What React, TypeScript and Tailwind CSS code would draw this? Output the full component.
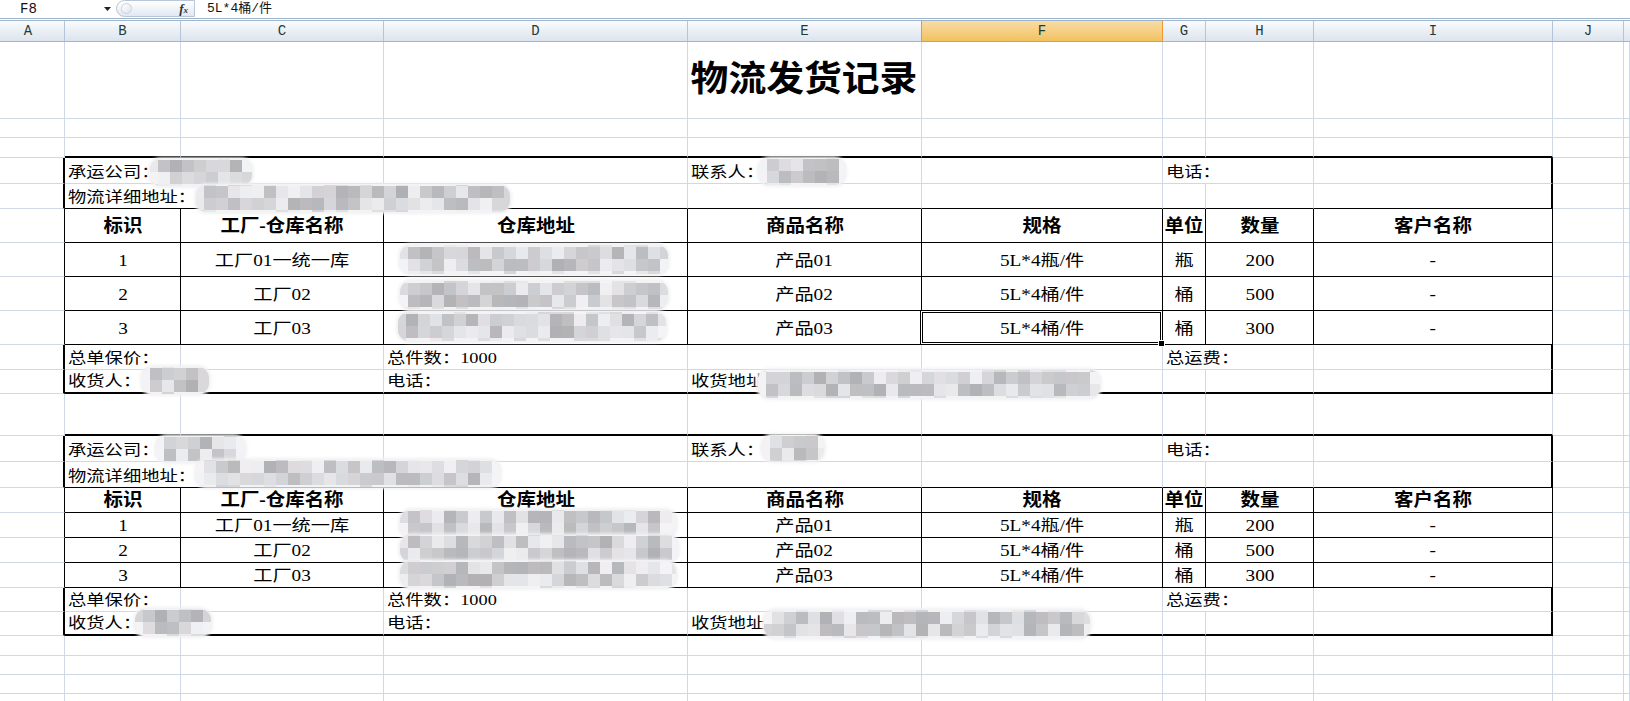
import React from 'react';

type Bd = 'g' | 'b' | 'B' | 'n';
type Kind = 'info' | 'head' | 'data' | 'title';
type Cell = { t?: React.ReactNode; r: Bd; b: Bd; k: Kind };
type Row = { h: string; cells: Cell[] };

const RB: Record<Bd, string> = {
  g: 'border-r border-r-[#d0d7e5]',
  b: 'border-r border-r-black',
  B: 'border-r-2 border-r-black',
  n: '',
};
const BB: Record<Bd, string> = {
  g: 'border-b border-b-[#d0d7e5]',
  b: 'border-b border-b-black',
  B: 'border-b-2 border-b-black',
  n: '',
};

const W = [
  'w-[65px] shrink-0',
  'w-[116px] shrink-0',
  'w-[203px] shrink-0',
  'w-[304px] shrink-0',
  'w-[234px] shrink-0',
  'w-[241px] shrink-0',
  'w-[43px] shrink-0',
  'w-[108px] shrink-0',
  'w-[239px] shrink-0',
  'w-[71px] shrink-0',
  'flex-1 min-w-0',
];
const COLS = ['A', 'B', 'C', 'D', 'E', 'F', 'G', 'H', 'I', 'J', ''];

const KIND: Record<Kind, { wrap: string; span: string }> = {
  info: {
    wrap: 'items-end justify-start pl-[3px] pb-[3px] text-[15px] leading-[16px]',
    span: 'origin-left scale-x-[1.22]',
  },
  head: {
    wrap: 'items-center justify-center text-[18px] leading-[20px] font-bold',
    span: 'scale-x-[1.08]',
  },
  data: {
    wrap: 'items-center justify-center pt-[2px] text-[16px] leading-[18px]',
    span: 'scale-x-[1.2]',
  },
  title: {
    wrap: 'items-center justify-center text-[35px] leading-[40px] font-bold',
    span: 'scale-x-[1.08]',
  },
};

const plain = (h: string, bot: Bd = 'g'): Row => ({
  h,
  cells: W.map((_, i) => ({ r: 'g' as Bd, b: (i >= 1 && i <= 8 ? bot : 'g') as Bd, k: 'info' as Kind })),
});

const titleRow: Row = {
  h: 'h-[77px]',
  cells: W.map((_, i) => ({
    r: 'g' as Bd,
    b: 'g' as Bd,
    k: 'title' as Kind,
    t: i === 4 ? '物流发货记录' : undefined,
  })),
};

const infoRow = (
  h: string,
  t: Record<number, React.ReactNode>,
  noR: number[],
  bot: Bd
): Row => ({
  h,
  cells: W.map((_, i) => ({
    t: t[i],
    k: 'info' as Kind,
    r: (i === 0 || i === 8 ? 'B' : noR.includes(i) ? 'n' : 'g') as Bd,
    b: (i >= 1 && i <= 8 ? bot : 'g') as Bd,
  })),
});

const dataRow = (h: string, t: string[], kind: Kind): Row => ({
  h,
  cells: W.map((_, i) => ({
    t: i >= 1 && i <= 8 ? t[i - 1] : undefined,
    k: kind,
    r: (i <= 8 ? 'b' : 'g') as Bd,
    b: (i >= 1 && i <= 8 ? 'b' : 'g') as Bd,
  })),
});

const HEAD = ['标识', '工厂-仓库名称', '仓库地址', '商品名称', '规格', '单位', '数量', '客户名称'];
const D1 = ['1', '工厂01一统一库', '', '产品01', '5L*4瓶/件', '瓶', '200', '-'];
const D2 = ['2', '工厂02', '', '产品02', '5L*4桶/件', '桶', '500', '-'];
const D3 = ['3', '工厂03', '', '产品03', '5L*4桶/件', '桶', '300', '-'];

const carrier = { 1: '承运公司：', 4: '联系人：', 6: '电话：' };
const addr = { 1: '物流详细地址：' };
const total = { 1: '总单保价：', 3: '总件数：1000', 6: '总运费：' };
const recv = { 1: '收货人：', 3: '电话：', 4: '收货地址' };

const ROWS: Row[] = [
  titleRow,
  plain('h-[19px]'),
  plain('h-[20px]', 'B'),
  infoRow('h-[26px]', carrier, [1, 6], 'g'),
  infoRow('h-[25px]', addr, [1, 2], 'b'),
  dataRow('h-[34px]', HEAD, 'head'),
  dataRow('h-[34px]', D1, 'data'),
  dataRow('h-[34px]', D2, 'data'),
  dataRow('h-[34px]', D3, 'data'),
  infoRow('h-[25px]', total, [6], 'g'),
  infoRow('h-[24px]', recv, [4], 'B'),
  plain('h-[42px]', 'B'),
  infoRow('h-[26px]', carrier, [1, 6], 'g'),
  infoRow('h-[26px]', addr, [1, 2], 'b'),
  dataRow('h-[25px]', HEAD, 'head'),
  dataRow('h-[25px]', D1, 'data'),
  dataRow('h-[25px]', D2, 'data'),
  dataRow('h-[25px]', D3, 'data'),
  infoRow('h-[24px]', total, [6], 'g'),
  infoRow('h-[24px]', recv, [4], 'B'),
  plain('h-[20px]'),
  plain('h-[19px]'),
  plain('h-[19px]'),
  plain('h-[19px]'),
];

const BLOBS = [
  { x: 150, y: 159, w: 102, h: 27 },
  { x: 759, y: 158, w: 86, h: 27 },
  { x: 196, y: 185, w: 314, h: 27 },
  { x: 400, y: 245, w: 268, h: 29 },
  { x: 400, y: 281, w: 268, h: 28 },
  { x: 398, y: 312, w: 268, h: 29 },
  { x: 142, y: 367, w: 67, h: 27 },
  { x: 758, y: 370, w: 342, h: 28 },
  { x: 156, y: 436, w: 89, h: 26 },
  { x: 762, y: 435, w: 62, h: 26 },
  { x: 196, y: 460, w: 304, h: 27 },
  { x: 400, y: 510, w: 276, h: 27 },
  { x: 400, y: 535, w: 278, h: 27 },
  { x: 400, y: 561, w: 276, h: 27 },
  { x: 135, y: 609, w: 76, h: 27 },
  { x: 764, y: 610, w: 326, h: 28 },
];

function rnd(s: number) {
  const x = Math.sin(s * 12.9898 + 78.233) * 43758.5453;
  return x - Math.floor(x);
}

function Blob({ x, y, w, h, seed }: { x: number; y: number; w: number; h: number; seed: number }) {
  const cols = Math.ceil(w / 12) + 1;
  const rows = Math.ceil(h / 12) + 1;
  const top = -Math.round((rows * 12 - h) / 2);
  const tiles: React.ReactNode[] = [];
  for (let r = 0; r < rows; r++) {
    for (let c = 0; c < cols; c++) {
      const v = rnd(seed * 131 + r * 17 + c * 3.7);
      let g = 176 + v * 64;
      if (c === 0 || c >= cols - 2 || r === 0 || r === rows - 1) g = Math.min(243, g + 35);
      const t = rnd(seed * 7 + c * 11 + r) * 10 - 5;
      const col = `rgb(${Math.round(g + t * 0.4)},${Math.round(g)},${Math.round(g - t * 0.2 + 3)})`;
      tiles.push(<div key={`${r}-${c}`} style={{ width: 12, height: 12, background: col }} />);
    }
  }
  return (
    <div
      className="absolute overflow-hidden rounded-[11px] bg-[#ededed] shadow-[0_0_3px_2px_rgba(240,240,240,0.9)]"
      style={{ left: x, top: y, width: w, height: h }}
    >
      <div className="flex flex-wrap" style={{ width: cols * 12, marginLeft: -4, marginTop: top }}>
        {tiles}
      </div>
    </div>
  );
}

function CellView({ c, i }: { c: Cell; i: number }) {
  const k = KIND[c.k];
  return (
    <div className={`flex overflow-visible whitespace-nowrap ${W[i]} ${RB[c.r]} ${BB[c.b]} ${k.wrap}`}>
      {c.t ? <span className={`inline-block ${k.span}`}>{c.t}</span> : null}
    </div>
  );
}

const HEADER_CELL = [
  'border-t border-b border-r border-t-[#9eb6ce] border-b-[#9eb6ce] border-r-[#b4c5da] bg-linear-to-b from-[#f9fbfd] to-[#dde4ee] pr-[8px]',
  'border-t border-b border-r border-t-[#9eb6ce] border-b-[#9eb6ce] border-r-[#b4c5da] bg-linear-to-b from-[#f9fbfd] to-[#dde4ee]',
  'border-t border-b border-r border-t-[#9eb6ce] border-b-[#9eb6ce] border-r-[#b4c5da] bg-linear-to-b from-[#f9fbfd] to-[#dde4ee]',
  'border-t border-b border-r border-t-[#9eb6ce] border-b-[#9eb6ce] border-r-[#b4c5da] bg-linear-to-b from-[#f9fbfd] to-[#dde4ee]',
  'border-t border-b border-r border-t-[#9eb6ce] border-b-[#9eb6ce] border-r-[#f29536] bg-linear-to-b from-[#f9fbfd] to-[#dde4ee]',
  'border-t border-b border-r border-t-[#9eb6ce] border-b-[#f29536] border-r-[#f29536] bg-linear-to-b from-[#f9dca4] to-[#f1c25f]',
  'border-t border-b border-r border-t-[#9eb6ce] border-b-[#9eb6ce] border-r-[#b4c5da] bg-linear-to-b from-[#f9fbfd] to-[#dde4ee]',
  'border-t border-b border-r border-t-[#9eb6ce] border-b-[#9eb6ce] border-r-[#b4c5da] bg-linear-to-b from-[#f9fbfd] to-[#dde4ee]',
  'border-t border-b border-r border-t-[#9eb6ce] border-b-[#9eb6ce] border-r-[#b4c5da] bg-linear-to-b from-[#f9fbfd] to-[#dde4ee]',
  'border-t border-b border-r border-t-[#9eb6ce] border-b-[#9eb6ce] border-r-[#b4c5da] bg-linear-to-b from-[#f9fbfd] to-[#dde4ee]',
  'border-t border-b border-t-[#9eb6ce] border-b-[#9eb6ce] bg-linear-to-b from-[#f9fbfd] to-[#dde4ee]',
];

export default function App() {
  return (
    <div className="relative flex h-[701px] w-[1630px] flex-col overflow-hidden bg-white text-black font-['Liberation_Serif','Noto_Sans_CJK_SC',serif]">
      {/* formula bar */}
      <div className="flex h-[19px] shrink-0 items-center border-b border-b-[#9fb3cb] font-['Liberation_Mono','Noto_Sans_CJK_SC',monospace] text-[13px] text-[#111]">
        <div className="flex w-[116px] items-center pl-[20px] pr-[5px]">
          <span className="text-[14px]">F8</span>
          <svg className="ml-auto" width="7" height="4" viewBox="0 0 7 4">
            <path d="M0 0H7L3.5 4Z" fill="#222" />
          </svg>
        </div>
        <div className="flex h-[17px] w-[79px] items-center self-start rounded-l-full border border-[#b7c6d8] bg-linear-to-b from-white to-[#e1e8f1]">
          <span className="ml-[4px] h-[11px] w-[11px] rounded-full border border-[#c6d2e0] bg-linear-to-br from-white to-[#dde5ee]" />
          <span className="ml-auto mr-[6px] font-['Liberation_Serif',serif] text-[13px] font-bold italic leading-none text-[#333]">
            f<span className="text-[9px]">x</span>
          </span>
        </div>
        <div className="pl-[12px]">5L*4桶/件</div>
      </div>
      <div className="h-[1px] shrink-0 bg-white" />
      {/* column headers */}
      <div className="flex h-[22px] shrink-0 font-['Liberation_Mono',monospace] text-[14px] text-[#1f3b38]">
        {COLS.map((c, i) => (
          <div key={i} className={`flex items-center justify-center ${W[i]} ${HEADER_CELL[i]}`}>
            {c}
          </div>
        ))}
      </div>
      {/* sheet rows */}
      {ROWS.map((row, ri) => (
        <div key={ri} className={`flex shrink-0 ${row.h}`}>
          {row.cells.map((c, i) => (
            <CellView key={i} c={c} i={i} />
          ))}
        </div>
      ))}

      {/* redaction blobs */}
      {BLOBS.map((b, i) => (
        <Blob key={i} x={b.x} y={b.y} w={b.w} h={b.h} seed={i + 1} />
      ))}

      {/* active cell F8 */}
      <div className="absolute left-[920px] top-[310px] h-[35px] w-[243px] border border-black">
        <div className="absolute inset-0 border border-white">
          <div className="absolute inset-0 border border-black" />
        </div>
      </div>
      <div className="absolute left-[1158px] top-[340px] h-[7px] w-[7px] border border-white bg-black" />
    </div>
  );
}
